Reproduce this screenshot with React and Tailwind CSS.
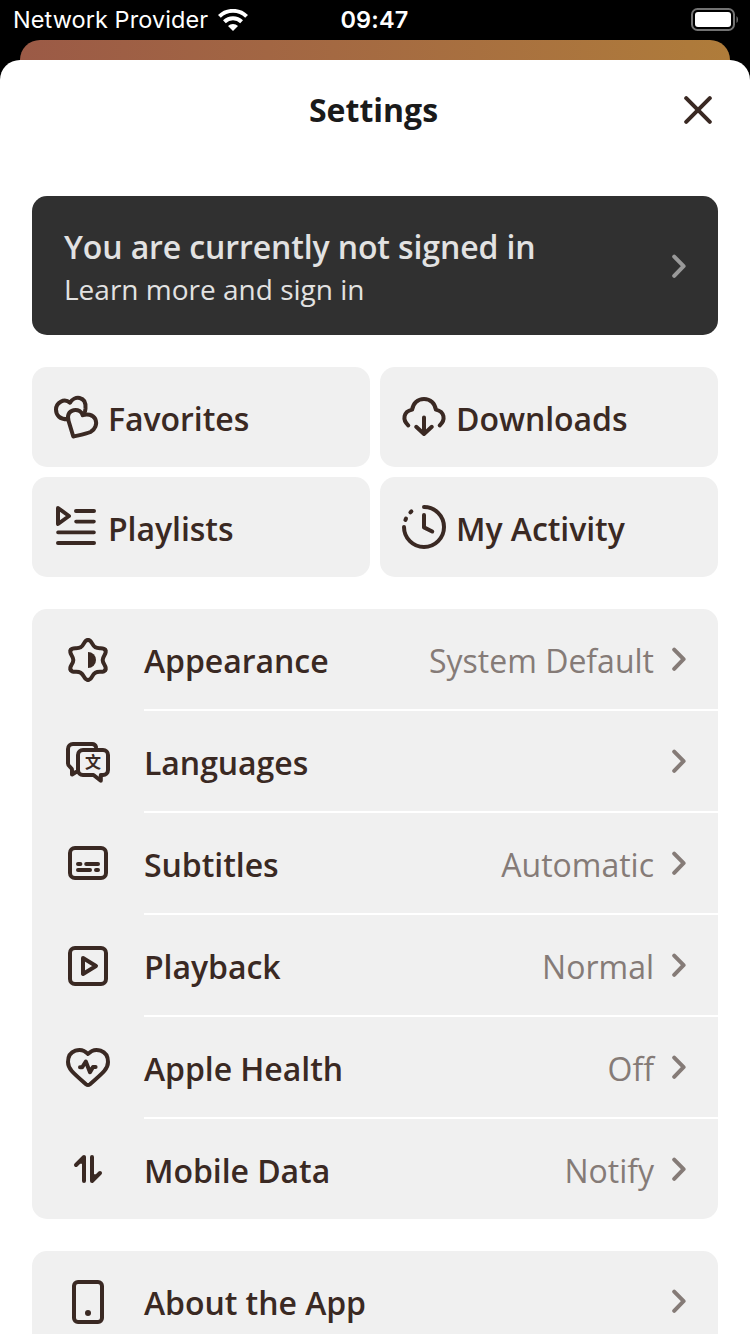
import React from 'react'

const Icon = ({ children }) => (
  <svg
    width="48"
    height="48"
    viewBox="0 0 48 48"
    fill="none"
    stroke="currentColor"
    strokeWidth="4"
    strokeLinecap="round"
    strokeLinejoin="round"
    className="shrink-0"
  >
    {children}
  </svg>
)

const FavoritesIcon = () => (
  <Icon>
    <path d="M15.3 26.3C8 26.3 4 22.5 4 16.5C4 10 12 4.5 18 9.7C22 2.5 34.5 2.5 33.5 15.5L33 18.5" />
    <path d="M21.3 43.5L16.6 28C14.8 22.5 17 18.2 21.5 17.2C26 16.2 30 18.7 30.7 22.3C34.5 20.5 41 21.5 43.3 26C45.5 31 43 36.5 38.5 39C34 41 28 42 21.3 43.5Z" />
  </Icon>
)

const DownloadsIcon = () => (
  <Icon>
    <path d="M8.3 32.4C2.2 27 3.2 18.5 12.2 16.6C13 10.5 17.5 6 24 6S35 10.5 35.8 16.6C44.8 18.5 45.8 27 39.7 32.4" />
    <path d="M24 24.5V41M16.2 33.8L24 41L31.8 33.8" />
    <path d="M22 38H26L24 41Z" strokeWidth="2" />
  </Icon>
)

const PlaylistsIcon = () => (
  <Icon>
    <path d="M6 5L17 13L6 21ZM24 8H42M6 40H42" />
    <path d="M24 18.6H42M6 29.4H42" strokeWidth="3.6" />
  </Icon>
)

const ActivityIcon = () => (
  <Icon>
    <path d="M24 4A20 20 0 1 1 4 24M24 12V24.4L32.2 28.5" />
    <path d="M5.4 17L6 15.6M10.4 9.4L11.4 8.4" />
  </Icon>
)

const AppearanceIcon = () => (
  <Icon>
    {[0, 60, 120, 180, 240, 300].map((angle) => (
      <path
        key={angle}
        transform={`rotate(${angle} 24 24)`}
        d="M24 4C28 4 27.6 9.1 31.35 11.3C35.1 13.44 39.32 10.54 41.32 14"
      />
    ))}
    <path d="M24 16A8 8 0 0 1 24 32Z" fill="currentColor" stroke="none" />
  </Icon>
)

const LanguagesIcon = () => (
  <Icon>
    <path d="M32 9A4 4 0 0 0 28 6H9A5 5 0 0 0 4 11V25.5C4 29 8 29 8 32V36.6L12 34" />
    <path d="M19 12H39A5 5 0 0 1 44 17V32A5 5 0 0 1 39 37H36.8V42.8L29.5 37H19A5 5 0 0 1 14 32V17A5 5 0 0 1 19 12Z" />
    <text
      x="29"
      y="30.2"
      textAnchor="middle"
      fill="currentColor"
      stroke="none"
      className="font-['Noto_Sans_CJK_SC',sans-serif] text-[16px] font-bold"
    >
      文
    </text>
  </Icon>
)

const SubtitlesIcon = () => (
  <Icon>
    <rect x="6" y="8" width="36" height="30" rx="5" />
    <path d="M14 24H16.4M22.2 24H34M14 30H26M32 30H34" />
  </Icon>
)

const PlaybackIcon = () => (
  <Icon>
    <rect x="6" y="6" width="36" height="36" rx="5" />
    <path d="M19 16L32 24L19 32Z" />
  </Icon>
)

const HealthIcon = () => (
  <Icon>
    <path d="M24 10C17 2.5 4 6 4 18C4 24.5 8 28 22 40.2Q24 41.8 26 40.2C40 28 44 24.5 44 18C44 6 31 2.5 24 10Z" />
    <path d="M16 23.2H18.2L21.8 17.5L26 28.2L29 23H31.6" />
  </Icon>
)

const MobileDataIcon = () => (
  <Icon>
    <path d="M12 19L20 11V35M28 11V35L36 27" />
    <path d="M19 13.5V17L16 16.5ZM29 32.5V29L32 29.5Z" strokeWidth="2" />
  </Icon>
)

const PhoneIcon = () => (
  <Icon>
    <rect x="10" y="4" width="28" height="40" rx="4" />
    <circle cx="24" cy="35" r="3" fill="currentColor" stroke="none" />
  </Icon>
)

const Chevron = ({ className = 'text-[#857b77]' }) => (
  <svg width="14" height="24" viewBox="0 0 14 24" fill="none" className={`shrink-0 ${className}`}>
    <path
      d="M2.2 2.6L11.6 12.2L2.2 21.8"
      stroke="currentColor"
      strokeWidth="4"
      strokeLinecap="round"
      strokeLinejoin="round"
    />
  </svg>
)

const StatusBar = () => (
  <div className="grid h-10 grid-cols-3 items-center pl-[13px] pr-3 font-[Inter,sans-serif] text-[23.5px] leading-10 text-white">
    <div className="flex items-center gap-2.5 whitespace-nowrap">
      <span className="tracking-[0.07px]">Network Provider</span>
      <svg width="30" height="22" viewBox="0 0 30 22" fill="none" stroke="white" strokeWidth="4">
        <path d="M1.4 7.4A19.5 19.5 0 0 1 28.6 7.4" />
        <path d="M6.4 12.8A12.4 12.4 0 0 1 23.6 12.8" />
        <path d="M10 17A7.2 7.2 0 0 1 20 17L15 22Z" fill="white" stroke="none" />
      </svg>
    </div>
    <span className="pr-0.5 text-center font-semibold tracking-[0.2px]">09:47</span>
    <svg width="48" height="24" viewBox="0 0 48 24" className="justify-self-end">
      <rect x="2" y="1" width="42" height="21" rx="5.5" fill="none" stroke="#727272" strokeWidth="2" />
      <rect x="5" y="4" width="36" height="15" rx="3" fill="white" />
      <path d="M46.5 8V15Q48 14 48 11.5T46.5 8Z" fill="#727272" />
    </svg>
  </div>
)

const tiles = [
  { label: 'Favorites', icon: FavoritesIcon },
  { label: 'Downloads', icon: DownloadsIcon },
  { label: 'Playlists', icon: PlaylistsIcon },
  { label: 'My Activity', icon: ActivityIcon },
]

const settings = [
  { label: 'Appearance', value: 'System Default', icon: AppearanceIcon },
  { label: 'Languages', icon: LanguagesIcon },
  { label: 'Subtitles', value: 'Automatic', icon: SubtitlesIcon },
  { label: 'Playback', value: 'Normal', icon: PlaybackIcon },
  { label: 'Apple Health', value: 'Off', icon: HealthIcon },
  { label: 'Mobile Data', value: 'Notify', icon: MobileDataIcon },
]

const about = [{ label: 'About the App', icon: PhoneIcon }]

const SettingsGroup = ({ items }) => (
  <div className="rounded-[15px] bg-[#f0f0f0]">
    {items.map(({ label, value, icon: RowIcon }, index) => (
      <div key={label}>
        {index > 0 && <div className="ml-28 h-0.5 bg-white" />}
        <button className="flex h-[100px] w-full items-center px-8 text-left">
          <span className="mt-0.5 flex">
            <RowIcon />
          </span>
          <span className="ml-8 mt-[3px] flex-1 text-[32px] font-[580] leading-10 tracking-[-0.05px]">{label}</span>
          {value && <span className="mt-[3px] text-[32px] leading-10 text-[#857b77]">{value}</span>}
          <Chevron className="ml-[18px] text-[#857b77]" />
        </button>
      </div>
    ))}
  </div>
)

export default function App() {
  return (
    <div className="h-[1334px] w-[750px] overflow-hidden bg-black font-['Open_Sans',sans-serif] text-[#3a2923]">
      <StatusBar />
      <div className="mx-5 h-5 rounded-t-[20px] bg-linear-to-r from-[#9b5a46] to-[#af7c3a]" />
      <div className="h-[1274px] rounded-t-[20px] bg-white px-8">
        <header className="grid h-[100px] grid-cols-[45px_1fr_48px] items-center">
          <span />
          <h1 className="text-center text-[32px] font-bold text-[#1a1a1a]">Settings</h1>
          <button className="flex justify-end pr-1.5" aria-label="Close">
            <svg width="28" height="28" viewBox="0 0 28 28" fill="none" stroke="currentColor" strokeWidth="4" strokeLinecap="round">
              <path d="M2.2 2.2L25.8 25.8M25.8 2.2L2.2 25.8" />
            </svg>
          </button>
        </header>

        <button className="mt-9 flex h-[139px] w-full items-center justify-between rounded-[15px] bg-[#303030] px-8 text-left text-[#e2e2e2]">
          <span className="mt-0.5">
            <span className="block text-[32px] font-[580] leading-[44px] tracking-[-0.12px]">
              You are currently not signed in
            </span>
            <span className="block text-[28px] leading-10">Learn more and sign in</span>
          </span>
          <Chevron className="text-[#999999]" />
        </button>

        <div className="mt-8 grid grid-cols-2 gap-2.5">
          {tiles.map(({ label, icon: TileIcon }) => (
            <button key={label} className="flex h-[100px] items-center gap-2 rounded-[15px] bg-[#f0f0f0] px-5">
              <TileIcon />
              <span className="mt-[3px] text-[32px] font-[580] tracking-[-0.05px]">{label}</span>
            </button>
          ))}
        </div>

        <div className="mt-8 space-y-8">
          <SettingsGroup items={settings} />
          <SettingsGroup items={about} />
        </div>
      </div>
    </div>
  )
}
